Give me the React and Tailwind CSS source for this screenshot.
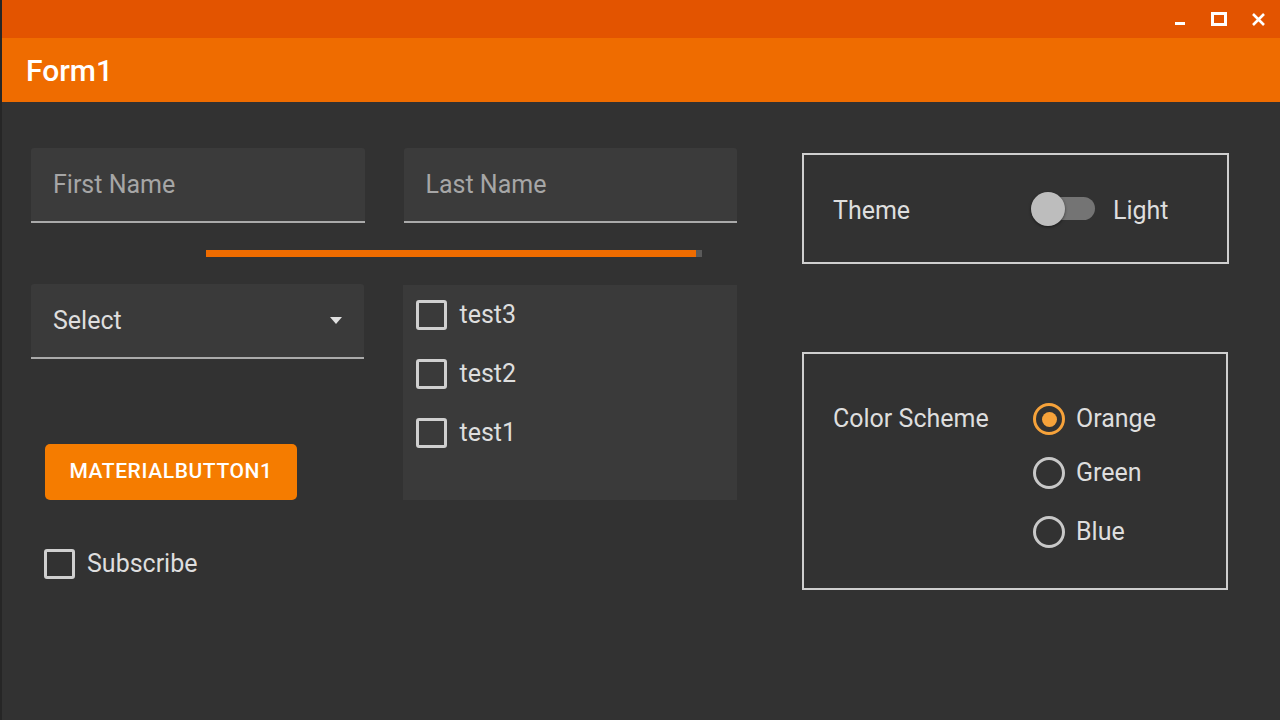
const FONT = { fontFamily: 'Roboto, "Noto Sans", sans-serif' }

function Box() {
  return (
    <span className="w-[31px] h-[30px] rounded-[3px] border-[3px] border-[#cfcfcf] shrink-0" />
  )
}

function Radio({ checked }) {
  return checked ? (
    <span className="w-[32px] h-[32px] rounded-full border-[3px] border-[#f6a23a] flex items-center justify-center shrink-0">
      <span className="w-[15px] h-[15px] rounded-full bg-[#f6a23a]" />
    </span>
  ) : (
    <span className="w-[32px] h-[32px] rounded-full border-[3px] border-[#c8c8c8] shrink-0" />
  )
}

export default function App() {
  return (
    <div style={FONT} className="w-[1280px] h-[720px] bg-[#323232] flex flex-col overflow-hidden border-l-2 border-[#262626]">
      <div className="h-[38px] bg-[#e35400] flex items-center justify-end gap-[24px] pr-[14px] shrink-0">
        <svg width="14" height="14" viewBox="0 0 14 14"><rect x="2" y="10" width="10" height="3" fill="#fff" /></svg>
        <svg width="16" height="14" viewBox="0 0 16 14"><rect x="1.5" y="1.5" width="13" height="11" fill="none" stroke="#fff" strokeWidth="3" /></svg>
        <svg width="15" height="15" viewBox="0 0 15 15"><path d="M2 2L13 13M13 2L2 13" stroke="#fff" strokeWidth="2.6" /></svg>
      </div>
      <div className="h-[64px] bg-[#ef6c00] flex items-center pl-[24px] shrink-0">
        <span className="text-white text-[30px] font-medium">Form1</span>
      </div>

      <div className="flex pt-[46px] pl-[29px]">
        <div className="w-[706px] flex flex-col">
          <div className="flex gap-[39px]">
            {['First Name', 'Last Name'].map((t) => (
              <div key={t} className="w-[334px] h-[75px] bg-[#3b3b3b] rounded-t-[3px] border-b-2 border-[#aaaaaa] flex items-center pl-[22px]">
                <span className="text-[25px] text-[#a6a6a6]">{t}</span>
              </div>
            ))}
          </div>

          <div className="mt-[27px] ml-[175px] w-[496px] h-[7px] bg-[#5a5a5a] flex">
            <div className="w-[490px] h-full bg-[#ef6c00]" />
          </div>

          <div className="flex gap-[39px] mt-[27px]">
            <div className="w-[334px] flex flex-col">
              <div className="h-[75px] bg-[#3a3a3a] rounded-t-[3px] border-b-2 border-[#aaaaaa] flex items-center justify-between pl-[22px] pr-[22px]">
                <span className="text-[25px] text-[#dedede]">Select</span>
                <svg width="12" height="8" viewBox="0 0 12 8"><path d="M0 0H12L6 7Z" fill="#e0e0e0" /></svg>
              </div>
              <button className="mt-[85px] ml-[14px] w-[252px] h-[56px] bg-[#f57c00] rounded-[5px] text-white text-[21px] font-medium tracking-[0.6px]">
                MATERIALBUTTON1
              </button>
              <div className="mt-[45px] ml-[13px] flex items-center gap-[12px]">
                <Box />
                <span className="text-[25px] text-[#dedede]">Subscribe</span>
              </div>
            </div>
            <div className="w-[334px] h-[215px] mt-[1px] bg-[#3a3a3a] flex flex-col pt-[15px] pl-[13px] gap-[29px]">
              {['test3', 'test2', 'test1'].map((t) => (
                <div key={t} className="flex items-center gap-[12px] h-[30px]">
                  <Box />
                  <span className="text-[25px] text-[#dedede]">{t}</span>
                </div>
              ))}
            </div>
          </div>
        </div>

        <div className="ml-[65px] flex flex-col">
          <div className="mt-[5px] w-[427px] h-[111px] border-2 border-[#cfcfcf] flex items-center pl-[29px]">
            <span className="text-[25px] text-[#dedede] w-[198px] pt-[4px]">Theme</span>
            <div className="relative w-[64px] h-[34px] flex items-center">
              <div className="w-[62px] h-[23px] ml-[2px] rounded-full bg-[#747474]" />
              <div className="absolute left-0 top-0 w-[34px] h-[34px] rounded-full bg-[#bdbdbd] shadow-[0_1px_3px_rgba(0,0,0,0.5)]" />
            </div>
            <span className="ml-[18px] text-[25px] text-[#dedede] pt-[4px]">Light</span>
          </div>

          <div className="mt-[88px] w-[426px] h-[238px] border-2 border-[#cfcfcf] flex items-start pl-[29px] pt-[48px]">
            <span className="text-[25px] text-[#dedede] w-[200px] leading-[34px]">Color Scheme</span>
            <div className="flex flex-col gap-[20px]">
              {[['Orange', true], ['Green', false], ['Blue', false]].map(([t, c], i) => (
                <div key={t} className={`flex items-center gap-[11px] h-[34px] ${i === 2 ? 'mt-[5px]' : ''}`}>
                  <Radio checked={c} />
                  <span className="text-[25px] text-[#dedede]">{t}</span>
                </div>
              ))}
            </div>
          </div>
        </div>
      </div>
    </div>
  )
}
